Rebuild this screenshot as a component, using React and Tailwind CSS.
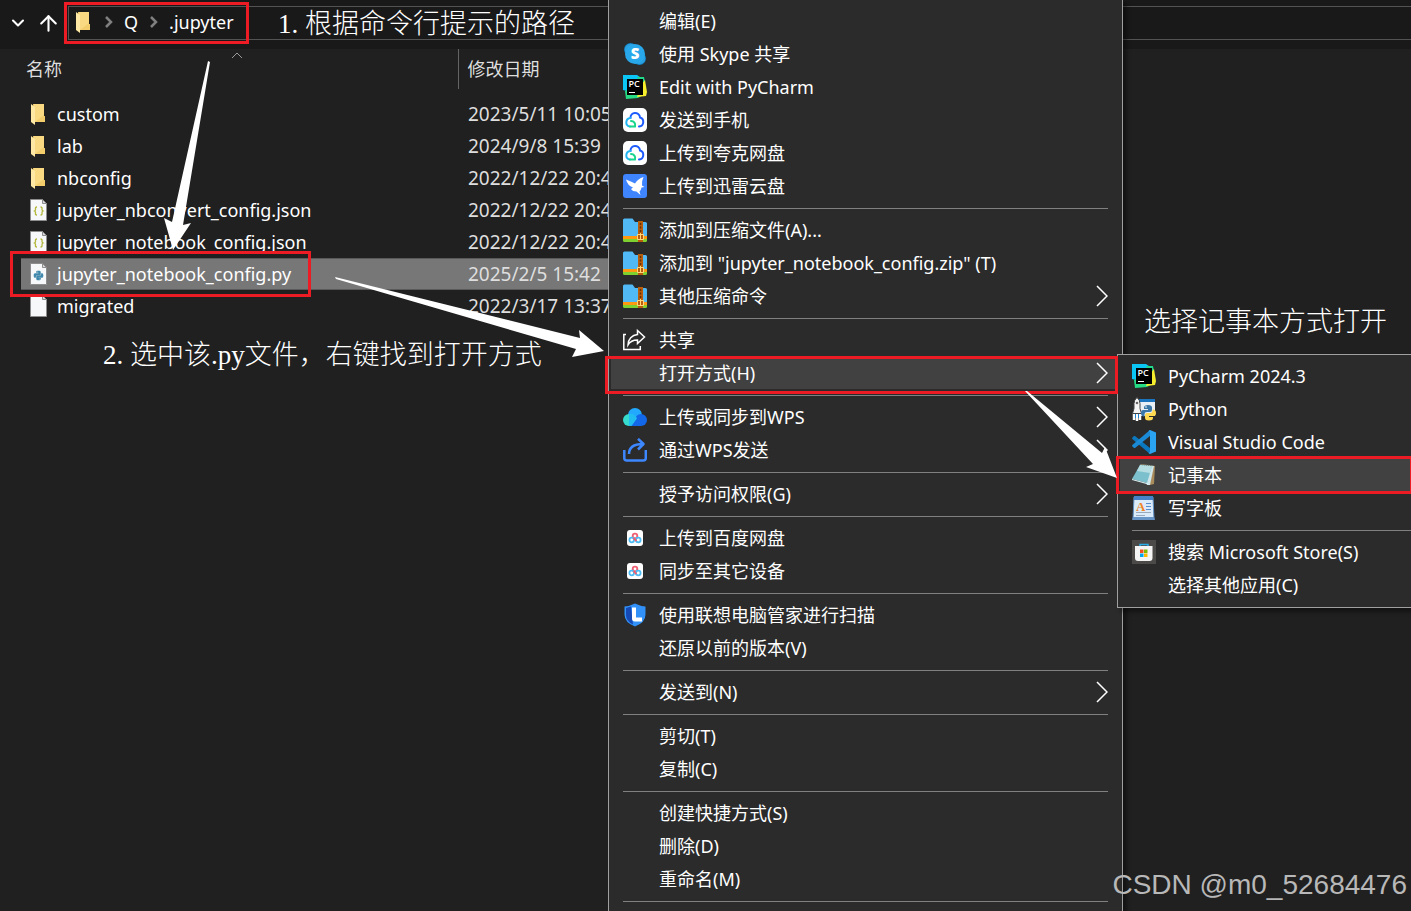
import { ArrowUp, ChevronDown } from 'lucide-react';
import { FaPython } from 'react-icons/fa';

const files = [
  { name: 'custom', date: '2023/5/11 10:05', icon: FolderIcon },
  { name: 'lab', date: '2024/9/8 15:39', icon: FolderIcon },
  { name: 'nbconfig', date: '2022/12/22 20:44', icon: FolderIcon },
  { name: 'jupyter_nbconvert_config.json', date: '2022/12/22 20:44', icon: JsonIcon },
  { name: 'jupyter_notebook_config.json', date: '2022/12/22 20:44', icon: JsonIcon },
  { name: 'jupyter_notebook_config.py', date: '2025/2/5 15:42', icon: PyFileIcon, selected: true },
  { name: 'migrated', date: '2022/3/17 13:37', icon: PageIcon },
];

const menuGroups = [
  [
    { label: '编辑(E)' },
    { label: '使用 Skype 共享', icon: SkypeIcon },
    { label: 'Edit with PyCharm', icon: PyCharmIcon },
    { label: '发送到手机', icon: QuarkIcon },
    { label: '上传到夸克网盘', icon: QuarkIcon },
    { label: '上传到迅雷云盘', icon: XunleiIcon },
  ],
  [
    { label: '添加到压缩文件(A)...', icon: ZipIcon },
    { label: '添加到 "jupyter_notebook_config.zip" (T)', icon: ZipIcon },
    { label: '其他压缩命令', icon: ZipIcon, sub: true },
  ],
  [
    { label: '共享', icon: ShareIcon },
    { label: '打开方式(H)', sub: true, active: true },
  ],
  [
    { label: '上传或同步到WPS', icon: WpsCloudIcon, sub: true },
    { label: '通过WPS发送', icon: WpsSendIcon, sub: true },
  ],
  [{ label: '授予访问权限(G)', sub: true }],
  [
    { label: '上传到百度网盘', icon: BaiduIcon },
    { label: '同步至其它设备', icon: BaiduIcon },
  ],
  [
    { label: '使用联想电脑管家进行扫描', icon: LenovoIcon },
    { label: '还原以前的版本(V)' },
  ],
  [{ label: '发送到(N)', sub: true }],
  [{ label: '剪切(T)' }, { label: '复制(C)' }],
  [{ label: '创建快捷方式(S)' }, { label: '删除(D)' }, { label: '重命名(M)' }],
  [],
];

const openWithGroups = [
  [
    { label: 'PyCharm 2024.3', icon: PyCharmIcon },
    { label: 'Python', icon: PyLauncherIcon },
    { label: 'Visual Studio Code', icon: VsCodeIcon },
    { label: '记事本', icon: NotepadIcon, active: true },
    { label: '写字板', icon: WordpadIcon },
  ],
  [
    { label: '搜索 Microsoft Store(S)', icon: StoreIcon },
    { label: '选择其他应用(C)' },
  ],
];

function FolderIcon() {
  return (
    <svg width="18" height="22" viewBox="0 0 18 22">
      <path d="M3 1h11v12h1v6H4z" fill="#f3cd6b" />
      <path d="M4 1h10v11L5 19z" fill="#f9da83" />
      <path d="M1 1l4 3v18l-4-3z" fill="#ffe8a3" />
    </svg>
  );
}

function PageIcon({ children }) {
  return (
    <svg width="18" height="22" viewBox="0 0 18 22">
      <path d="M.5.5h12l4 4v17H.5z" fill="#f7f8f9" stroke="#8d8d8d" />
      <path d="M12.5.5v4h4z" fill="#d6d6d6" stroke="#8d8d8d" />
      {children}
    </svg>
  );
}

function JsonIcon() {
  return (
    <PageIcon>
      <path
        d="M7 8c-2 0-1.500 1.500-1.500 2.500s-1 1.500-1 1.500 1 .5 1 1.500-.5 2.500 1.500 2.500M10.500 8c2 0 1.500 1.500 1.500 2.500s1 1.500 1 1.500-1 .5-1 1.500.5 2.500-1.500 2.500"
        fill="none"
        stroke="#b3b83c"
        strokeWidth="1.3"
      />
    </PageIcon>
  );
}

function PyFileIcon() {
  return (
    <PageIcon>
      <FaPython x="3" y="7" size={11} color="#3f88ac" />
    </PageIcon>
  );
}

function SkypeIcon() {
  return (
    <svg width="24" height="24" viewBox="0 0 24 24">
      <circle cx="7.500" cy="7.500" r="6.500" fill="#1180c4" />
      <circle cx="16.500" cy="16.500" r="6.500" fill="#1180c4" />
      <circle cx="7.500" cy="7.500" r="5.700" fill="#2aa0df" />
      <circle cx="16.500" cy="16.500" r="5.700" fill="#2aa0df" />
      <circle cx="12" cy="12" r="10" fill="#28a8ea" />
      <text x="12" y="17" textAnchor="middle" fontFamily="Open Sans, sans-serif" fontSize="15" fontWeight="800" fill="#fff">S</text>
    </svg>
  );
}

function PyCharmIcon() {
  return (
    <svg width="24" height="24" viewBox="0 0 24 24">
      <path d="M0 0h14l3 2 0 8L4 16 0 15z" fill="#0bc5f5" />
      <path d="M14 2h7l1 5-4 5z" fill="#21d789" />
      <path d="M2 16l9-4 9 8-5 3-12 1z" fill="#25dc84" />
      <path d="M18 10l4-5 2 12-1 4-9 1z" fill="#f6ee2c" />
      <path d="M4 4h16v16H4z" fill="#000" />
      <text x="5.500" y="12" fontFamily="Open Sans, sans-serif" fontSize="9" fontWeight="600" fill="#fff">PC</text>
      <path d="M6 17h6v1H6z" fill="#fff" />
    </svg>
  );
}

function QuarkIcon() {
  return (
    <svg width="24" height="24" viewBox="0 0 24 24" fill="none" strokeWidth="2" strokeLinecap="round">
      <rect width="24" height="24" rx="5" fill="#fff" />
      <path d="M7.500 10C7 3.500 16.500 3.500 17 9.500c4.500 1 4.500 8.500-1 9" stroke="#1d5bff" />
      <path d="M7.500 10C2 10.500 2 18.500 7 18.500" stroke="#22b6f3" />
      <path d="M7 18.500h5c.8-3-1-5.500-4-5.500" stroke="#18d68b" />
    </svg>
  );
}

function XunleiIcon() {
  return (
    <svg width="24" height="24" viewBox="0 0 24 24">
      <rect width="24" height="24" rx="3" fill="#3f85ff" />
      <path d="M3 5.500q5 2 9 4Q15 4.500 20.500 3q-2 4-1.500 8.500l2.500 1.500-3 .5q-.5 3-2 4l1 3.500-4-3.500q-4 0-5.500-2.500l2-1.500Q4.500 11.500 3 5.500z" fill="#fff" />
    </svg>
  );
}

function ZipIcon() {
  return (
    <svg width="24" height="24" viewBox="0 0 24 24">
      <path d="M0 2q0-1.500 1.500-1.500h8L12 4h10.500Q24 4 24 5.500V19H0z" fill="#52b9f7" />
      <path d="M0 18h24v4H0z" fill="#ff9912" />
      <path d="M0 21h24v1.500q0 1.500-1.500 1.500h-21Q0 24 0 22.500z" fill="#7fd12f" />
      <path d="M15 3h5v21h-5z" fill="#b85d0c" />
      <path d="M17.500 5v11" stroke="#613009" strokeWidth="1.500" strokeDasharray="2 1.500" />
      <path d="M14.500 16.500h6v5h-6zM17.500 15v6" fill="none" stroke="#ffd77a" strokeWidth="1" />
    </svg>
  );
}

function ShareIcon() {
  return (
    <svg width="24" height="24" viewBox="0 0 24 24" fill="none" stroke="#fff" strokeWidth="1.500">
      <path d="M3 6.500H.8v15h16.500V18" />
      <path d="M14.500 2.500l7 6.500-7 6.500V12c-4.500 0-7.500 1.500-9.500 5 0-6 4-10 9.500-10.500z" />
    </svg>
  );
}

function WpsCloudIcon() {
  return (
    <svg width="24" height="24" viewBox="0 0 24 24">
      <circle cx="12" cy="10" r="7" fill="#22a9ff" />
      <circle cx="18" cy="15" r="6" fill="#1268e8" />
      <circle cx="6" cy="15" r="6" fill="#36dccd" />
      <path d="M6 9q4-1 6 2l3 3-6 7H6z" fill="#22bdf0" />
      <path d="M15 12l-6.500 9H18V9.500q-2 .5-3 2.500z" fill="#1268e8" />
    </svg>
  );
}

function WpsSendIcon() {
  return (
    <svg width="24" height="24" viewBox="0 0 24 24" fill="none" stroke="#3d87ff" strokeWidth="2.500" strokeLinejoin="round">
      <path d="M1.300 12v8q0 2.500 2.500 2.500h16.500q2.500 0 2.500-2.500v-8" />
      <path d="M6 16C6 9 11 6 20 6M15 0.800L20.500 6 15 11.500" />
    </svg>
  );
}

function BaiduIcon() {
  return (
    <svg width="16" height="16" viewBox="0 0 16 16" fill="none" strokeWidth="1.800">
      <rect width="16" height="16" rx="3" fill="#fff" />
      <circle cx="8" cy="6" r="2.300" stroke="#ef5f73" />
      <circle cx="4.700" cy="10" r="2.300" stroke="#4dbcf5" />
      <circle cx="11.300" cy="10" r="2.300" stroke="#4dbcf5" />
      <path d="M6.500 8l3 3" stroke="#ef5f73" />
    </svg>
  );
}

function LenovoIcon() {
  return (
    <svg width="24" height="24" viewBox="0 0 24 24">
      <path d="M12 .5q5 2.500 10.500 3v8q0 8-10.500 12Q1.500 19.500 1.500 11.500v-8Q7 3 12 .5z" fill="#3191f8" />
      <path d="M8 3.500L3 5v7q0 6 7 9.500z" fill="#1549b5" />
      <path d="M9 4.500h4v10h6v4h-7q-3 0-3-3z" fill="#fff" />
    </svg>
  );
}

function PyLauncherIcon() {
  return (
    <svg width="24" height="24" viewBox="0 0 24 24">
      <path d="M4 2h19v17H4z" fill="#e9eff5" />
      <path d="M4 2h19v3H4z" fill="#1b74bd" />
      <path d="M5 .5q3 2.500 3 6v5l1.500 5H.5l1.500-5v-5q0-3.500 3-6z" fill="#f5f5f5" stroke="#444" />
      <circle cx="5" cy="6" r="1.300" fill="#666" />
      <path d="M2 17v6M5 17v7M8 17v6" stroke="#fff" strokeWidth="2.500" />
      <path d="M3.500 17v4M6.500 17v4" stroke="#1f83d2" />
      <path d="M16 8q-4 0-4 2.500V12h4v1h-5q-2 0-2 3t2.500 3.500h1V17q0-2 2.500-2h3q2 0 2-2v-2.500Q20 8 16 8z" fill="#3a76a8" />
      <path d="M20.500 12.500V14q0 2-2.500 2h-3q-2 0-2 2v3q0 2.500 4 2.500t4-2.500v-1h-4v-1h5q2 0 2-3t-2.500-3.500z" fill="#ffd94f" />
      <circle cx="14" cy="10" r=".8" fill="#fff" />
    </svg>
  );
}

function VsCodeIcon() {
  return (
    <svg width="24" height="24" viewBox="0 0 24 24">
      <path d="M0 8l2-2h1l15 12v6L.3 9z" fill="#0c78c0" />
      <path d="M0 16l2 2h1L18 6V0L.3 15z" fill="#1a8ad6" />
      <path d="M18 0l6 2.500v19L18 24l-1.500-1 1.500-1V2l-1.500-1z" fill="#2aa3f1" />
    </svg>
  );
}

function NotepadIcon() {
  return (
    <svg width="24" height="24" viewBox="0 0 24 24">
      <path d="M9 1l14 2-1 18-4 1z" fill="#a98b5c" />
      <path d="M8 2l14 1-4 19-3 0z" fill="#cfe6ea" />
      <path d="M8 2l12 1-5 17L0 16z" fill="#7cc0cd" />
      <path d="M8 2l12 1-2 7L5 8z" fill="#b6dde2" />
      <path d="M0 16l15 4 3 2L0 17z" fill="#d9eef1" />
      <path d="M8 1.500l13 1.200" stroke="#677" strokeDasharray="1 1" />
    </svg>
  );
}

function WordpadIcon() {
  return (
    <svg width="24" height="24" viewBox="0 0 24 24">
      <path d="M2 1h19l1 22H1z" fill="#dcebf9" stroke="#5e8fc4" />
      <path d="M2 0h19v4H2z" fill="#4683c9" />
      <text x="4" y="15" fontFamily="Liberation Serif, serif" fontSize="13" fontWeight="700" fill="#f08427">A</text>
      <path d="M14 7.500h5M14 10.500h5M14 13.500h5" stroke="#5a8ed0" />
      <path d="M4 16.500h15M4 19.500h9" stroke="#9aaabd" />
      <path d="M1 21h21l1 3H0z" fill="#6795c8" />
    </svg>
  );
}

function StoreIcon() {
  return (
    <svg width="24" height="24" viewBox="0 0 24 24">
      <path d="M0 0h24v24H0z" fill="#4c4a48" />
      <path d="M8 7V4.500h8V7" fill="none" stroke="#2aaee8" strokeWidth="1.500" />
      <path d="M3 6h17.500v12q0 3-3 3H6q-3 0-3-3z" fill="#f4f4f4" />
      <path d="M8 9.500h3.500V13H8z" fill="#f25022" />
      <path d="M12 9.500h3.500V13H12z" fill="#7fba00" />
      <path d="M8 13.500h3.500V17H8z" fill="#00a4ef" />
      <path d="M12 13.500h3.500V17H12z" fill="#ffb900" />
    </svg>
  );
}

function MenuItem({ item }) {
  const Icon = item.icon;
  return (
    <button
      type="button"
      className={`flex h-[33px] w-full items-center gap-3 whitespace-nowrap pl-3 pr-3 text-left ${item.active ? 'bg-[#414141]' : ''}`}
    >
      <span className="flex size-6 shrink-0 items-center justify-center">{Icon && <Icon />}</span>
      <span className="flex-1">{item.label}</span>
      {item.sub && (
        <svg width="12" height="22" viewBox="0 0 12 22" fill="none" stroke="#fff" strokeWidth="1.500">
          <path d="M1 1l10 10L1 21" />
        </svg>
      )}
    </button>
  );
}

function Menu({ groups, label, className }) {
  return (
    <nav
      aria-label={label}
      className={`absolute border border-[#a0a0a0] bg-[#2b2b2b] px-0.5 pt-1 pb-1.5 text-[18px] leading-6 text-white shadow-[4px_4px_4px_rgba(0,0,0,0.4)] ${className}`}
    >
      {groups.map((group, i) => (
        <div key={i}>
          {i > 0 && <hr className="mx-3 mt-1.5 mb-1 border-[#808080]" />}
          {group.map((item) => (
            <MenuItem key={item.label} item={item} />
          ))}
        </div>
      ))}
    </nav>
  );
}

function AddressBar() {
  return (
    <header className="flex h-[49px] items-center bg-[#191919] pb-[3px] text-[18px]">
      <button type="button" aria-label="历史记录" className="ml-2 w-5">
        <ChevronDown size={20} strokeWidth={2.500} />
      </button>
      <button type="button" aria-label="向上" className="ml-2 w-6">
        <ArrowUp size={25} strokeWidth={2} />
      </button>
      <div className="ml-2 flex h-[34px] flex-1 items-center border border-r-0 border-[#535353] pb-0.5 pl-1.5">
        <FolderIcon />
        <Crumb />
        <a href="#q">Q</a>
        <Crumb />
        <a href="#jupyter">.jupyter</a>
      </div>
    </header>
  );
}

function Crumb() {
  return (
    <svg className="mx-[11px]" width="9" height="12" viewBox="0 0 9 12" fill="none" stroke="#808080" strokeWidth="2.500">
      <path d="M2 1l5 5-5 5" />
    </svg>
  );
}

function FileTable() {
  return (
    <table className="w-[620px] table-fixed text-left text-[18px]">
      <thead>
        <tr className="h-10 text-[#dedede]">
          <th className="w-[458px] pl-[26px] font-normal">
            <div className="relative">
              名称
              <svg className="absolute -top-1 left-[205px]" width="12" height="7" viewBox="0 0 12 7" fill="none" stroke="#9a9a9a">
                <path d="M1 6l5-5 5 5" />
              </svg>
            </div>
          </th>
          <th className="border-l border-[#636363] pl-[9px] font-normal">修改日期</th>
        </tr>
        <tr className="h-[9px]" />
      </thead>
      <tbody>
        {files.map(({ name, date, icon: Icon, selected }) => (
          <tr key={name} className="h-8 whitespace-nowrap">
            <td className="pl-[21px]">
              <div className={`flex h-8 items-center gap-[9px] pl-[9px] ${selected ? 'border-y border-[#5a5a5a] bg-[#777777]' : ''}`}>
                <Icon />
                {name}
              </div>
            </td>
            <td>
              <div className={`flex h-8 items-center pl-2.5 text-[19px] text-[#dedede] ${selected ? 'border-y border-[#5a5a5a] bg-[#777777]' : ''}`}>
                {date}
              </div>
            </td>
          </tr>
        ))}
      </tbody>
    </table>
  );
}

function Note({ className, children }) {
  return (
    <p className={`absolute whitespace-nowrap font-['Liberation_Serif','Noto_Sans_CJK_SC',serif] text-[27px] font-light leading-8 text-white ${className}`}>
      {children}
    </p>
  );
}

export default function App() {
  return (
    <main className="relative h-screen overflow-hidden bg-[#202020] font-['Noto_Sans','Noto_Sans_CJK_SC',sans-serif] text-white">
      <AddressBar />
      <FileTable />

      <Menu label="右键菜单" groups={menuGroups} className="-top-px -bottom-px left-[608px] w-[515px]" />
      <Menu label="打开方式" groups={openWithGroups} className="-right-5 left-[1117px] top-[354px]" />

      {/* step notes, frames and arrows */}
      <Note className="left-[278px] top-2">1. 根据命令行提示的路径</Note>
      <Note className="left-[103px] top-[339px]">2. 选中该.py文件，右键找到打开方式</Note>
      <Note className="left-[1144px] top-[306px]">选择记事本方式打开</Note>
      <div className="absolute left-16 top-0.5 h-[42px] w-[185px] border-3 border-[#ed1c24]" />
      <div className="absolute left-2.5 top-[251px] h-[46px] w-[301px] border-3 border-[#ed1c24]" />
      <div className="absolute left-[605px] top-[356px] h-[38px] w-[513px] border-3 border-[#ed1c24]" />
      <div className="absolute left-[1116px] -right-0.5 top-[456px] h-[38px] border-3 border-[#ed1c24]" />
      <svg className="pointer-events-none absolute left-0 top-0" width="1130" height="490" fill="#fff">
        <path d="M208 61l2 1-27 163 8-2-18 27-9-32 8 4z" />
        <path d="M335 277l245 61-1-8 25 21-32 6 4-8-240-70z" />
        <path d="M1025 391h2l75 62 3-6 12 31-31-11 7-3z" />
      </svg>
      <p className="absolute bottom-2.5 right-1 font-['Liberation_Sans',sans-serif] text-[28px] leading-8 text-[#b8b8b8]">
        CSDN @m0_52684476
      </p>
    </main>
  );
}
